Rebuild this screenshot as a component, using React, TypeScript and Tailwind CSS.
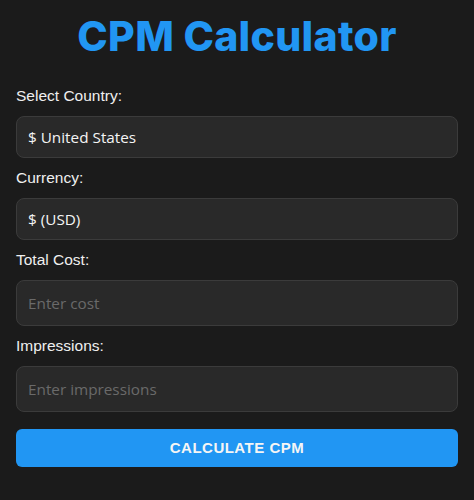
import { useState } from 'react';

const countries = [
  { value: 'US', label: '$ United States', currency: '$ (USD)' },
  { value: 'GB', label: '£ United Kingdom', currency: '£ (GBP)' },
  { value: 'EU', label: '€ Eurozone', currency: '€ (EUR)' },
];

const labelClass =
  "block text-[15.5px] leading-5 text-[#efefef] font-['Liberation_Sans',Arial,sans-serif] mb-[10px]";

const fieldClass =
  "w-full rounded-lg border border-[#3b3b3b] bg-[#292929] px-[11px] text-[15.3px] text-[#f5f5f5] font-['Open_Sans','Noto_Sans',sans-serif] outline-none placeholder:text-[#6a6a6a]";

export default function App() {
  const [country, setCountry] = useState('US');
  const [cost, setCost] = useState('');
  const [impressions, setImpressions] = useState('');

  const selected = countries.find((c) => c.value === country) ?? countries[0];

  return (
    <div className="min-h-[500px] w-full bg-[#1b1b1b] px-4 pt-[10px]">
      <h1 className="text-center text-[41px] leading-[52px] font-extrabold tracking-[0.3px] text-[#2196f3] font-['Inter',sans-serif] mb-[24px]">
        CPM Calculator
      </h1>

      <div className="mb-[10px]">
        <label className={labelClass}>Select Country:</label>
        <select
          value={country}
          onChange={(e) => setCountry(e.target.value)}
          className={`${fieldClass} h-[42px] appearance-none`}
        >
          {countries.map((c) => (
            <option key={c.value} value={c.value}>
              {c.label}
            </option>
          ))}
        </select>
      </div>

      <div className="mb-[10px]">
        <label className={labelClass}>Currency:</label>
        <select className={`${fieldClass} h-[42px] appearance-none`} value={selected.currency} onChange={() => {}}>
          <option>{selected.currency}</option>
        </select>
      </div>

      <div className="mb-[10px]">
        <label className={labelClass}>Total Cost:</label>
        <input
          type="number"
          placeholder="Enter cost"
          value={cost}
          onChange={(e) => setCost(e.target.value)}
          className={`${fieldClass} h-[46px]`}
        />
      </div>

      <div className="mb-[17px]">
        <label className={labelClass}>Impressions:</label>
        <input
          type="number"
          placeholder="Enter impressions"
          value={impressions}
          onChange={(e) => setImpressions(e.target.value)}
          className={`${fieldClass} h-[46px]`}
        />
      </div>

      <button className="h-[38px] w-full rounded-md bg-[#2196f3] text-[15px] font-bold uppercase tracking-[0.5px] text-[#f5f5f5] font-['Liberation_Sans',Arial,sans-serif]">
        Calculate CPM
      </button>
    </div>
  );
}
